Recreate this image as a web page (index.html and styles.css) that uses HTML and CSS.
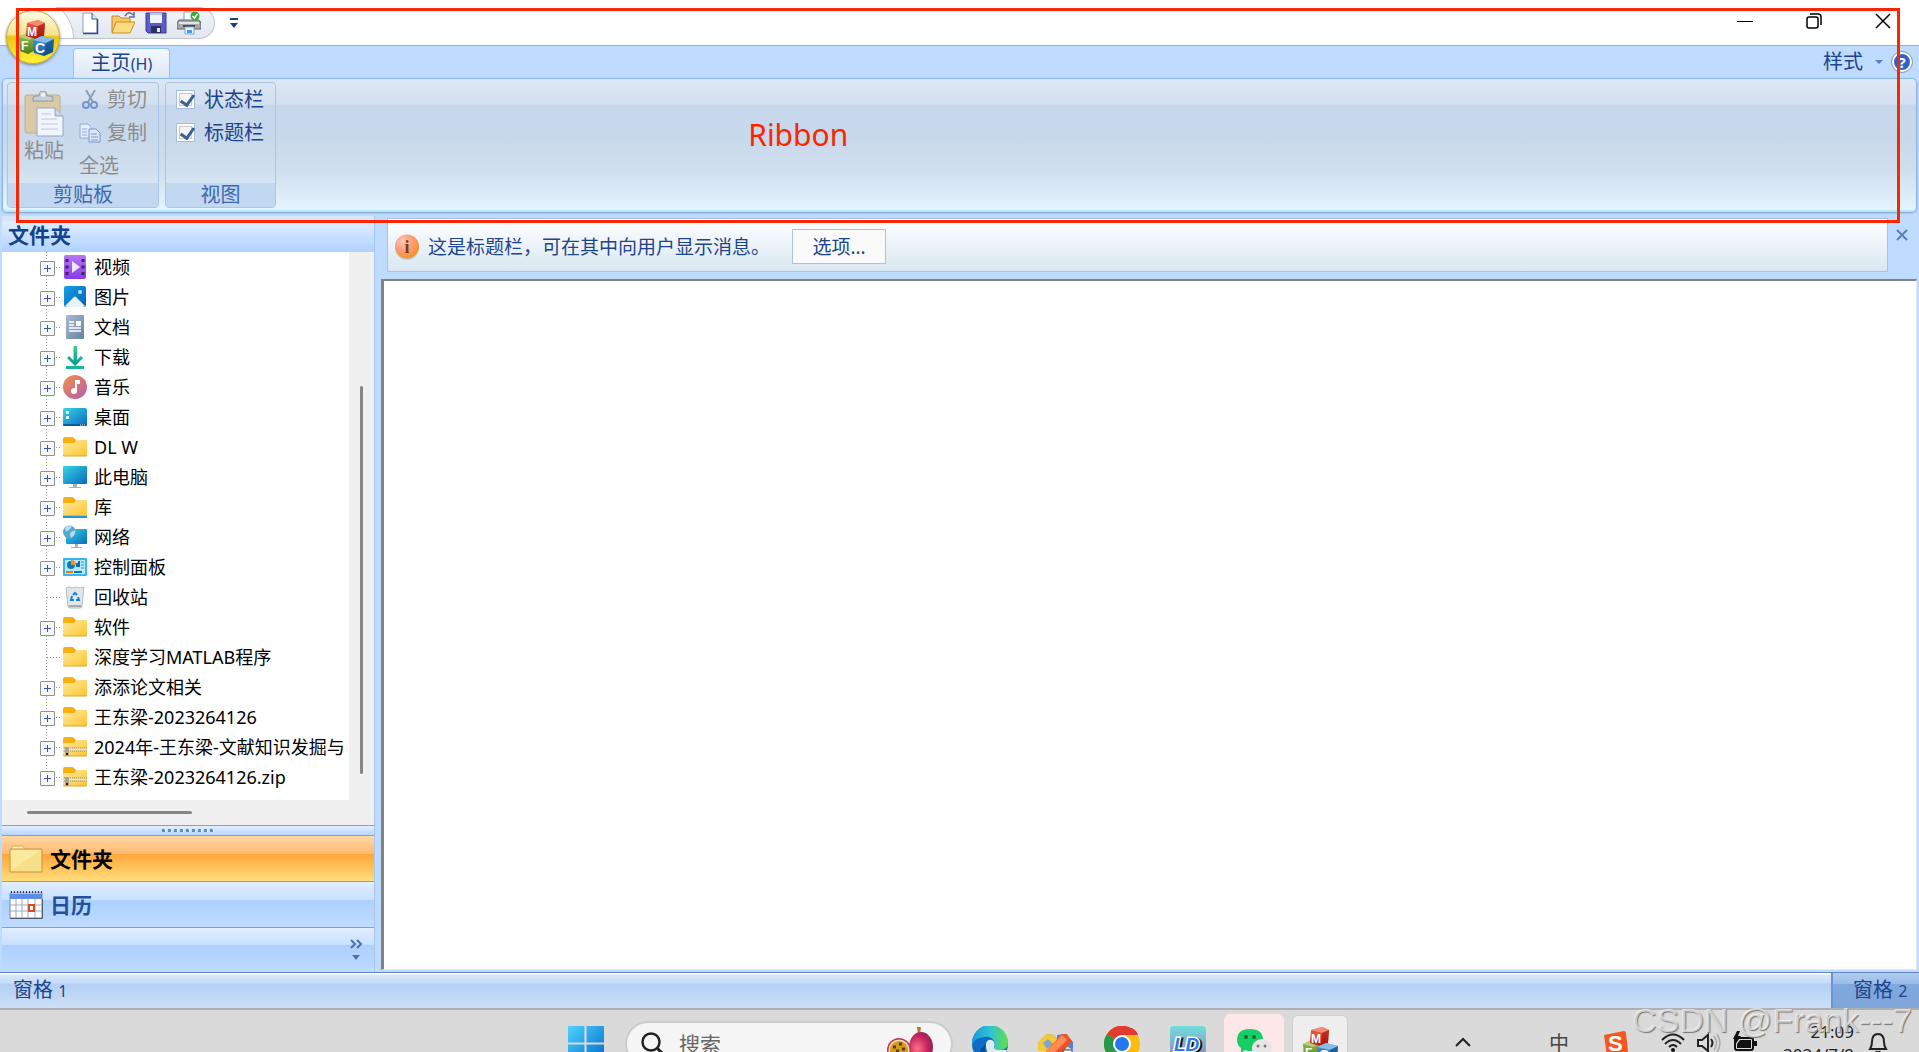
FILE: index.html
```
<!DOCTYPE html>
<html lang="zh-CN">
  <head>
    <meta charset="utf-8">
    <title>MFC</title>
    <link rel="stylesheet" href="styles.css">
  </head>

  <body>

    <!-- shared icons -->
    <svg class="sprite" aria-hidden="true">
      <defs>
        <linearGradient id="g-folder" x1="0" y1="0" x2="1" y2="1"><stop offset="0" stop-color="#ffe9a0"/><stop offset="1" stop-color="#fdc62f"/></linearGradient>
        <linearGradient id="g-screen" x1="0" y1="0" x2="1" y2="1"><stop offset="0" stop-color="#35d6e6"/><stop offset="1" stop-color="#0a67bd"/></linearGradient>
        <linearGradient id="g-purple" x1="0" y1="0" x2="0" y2="1"><stop offset="0" stop-color="#b777f5"/><stop offset="1" stop-color="#8a3ce6"/></linearGradient>
        <linearGradient id="g-pic" x1="0" y1="0" x2="1" y2="1"><stop offset="0" stop-color="#17a1e6"/><stop offset="1" stop-color="#0560b8"/></linearGradient>
        <linearGradient id="g-doc" x1="0" y1="0" x2="1" y2="1"><stop offset="0" stop-color="#a9bccf"/><stop offset="1" stop-color="#6583a2"/></linearGradient>
        <linearGradient id="g-down" x1="0" y1="0" x2="0" y2="1"><stop offset="0" stop-color="#3bcf8c"/><stop offset="1" stop-color="#0a9f98"/></linearGradient>
        <linearGradient id="g-music" x1="0" y1="0" x2="1" y2="1"><stop offset="0" stop-color="#f39148"/><stop offset="1" stop-color="#b25cae"/></linearGradient>
        <linearGradient id="g-red" x1="0" y1="0" x2="0" y2="1"><stop offset="0" stop-color="#ef6a55"/><stop offset="1" stop-color="#b91a12"/></linearGradient>
        <linearGradient id="g-blue" x1="0" y1="0" x2="0" y2="1"><stop offset="0" stop-color="#4f9bdc"/><stop offset="1" stop-color="#155896"/></linearGradient>
        <linearGradient id="g-green" x1="0" y1="0" x2="0" y2="1"><stop offset="0" stop-color="#9cc251"/><stop offset="1" stop-color="#4b7c1d"/></linearGradient>
        <linearGradient id="g-win" gradientUnits="userSpaceOnUse" x1="0" y1="0" x2="35" y2="35"><stop offset="0" stop-color="#4fd5ff"/><stop offset="1" stop-color="#0067c8"/></linearGradient>
        <linearGradient id="g-edge" x1="0" y1="0" x2="1" y2="0"><stop offset="0" stop-color="#1899dc"/><stop offset=".5" stop-color="#2fc2d4"/><stop offset="1" stop-color="#62e04b"/></linearGradient>
        <linearGradient id="g-ld" x1="0" y1="0" x2="0" y2="1"><stop offset="0" stop-color="#6fdfdb"/><stop offset="1" stop-color="#9a79b9"/></linearGradient>
        <radialGradient id="g-fruit" cx=".35" cy=".55" r=".7"><stop offset="0" stop-color="#ff7088"/><stop offset=".6" stop-color="#c8245f"/><stop offset="1" stop-color="#7e2458"/></radialGradient>
        <radialGradient id="g-info" cx=".35" cy=".3" r=".8"><stop offset="0" stop-color="#ffc9b8"/><stop offset=".5" stop-color="#fb9a72"/><stop offset="1" stop-color="#f09413"/></radialGradient>
      </defs>
      <symbol id="i-folder" viewBox="0 0 24 24">
        <path d="M0 4Q0 2 2 2h7q1 0 2 1l2 2v4H0z" fill="#f7b00c"/>
        <path d="M1 8h10l3-3h9q1 0 1 1v14q0 1-1 1H1q-1 0-1-1V9q0-1 1-1z" fill="url(#g-folder)"/>
        <path d="M0 20q0 1 1 1h22q1 0 1-1" fill="none" stroke="#e0a32a"/>
      </symbol>
      <symbol id="i-zip" viewBox="0 0 24 24">
        <use href="#i-folder"/>
        <path d="M1 13h23M1 16h23" stroke="#b09a6c" stroke-width="1.5" stroke-dasharray="1 1"/>
        <path d="M1 14.500h23" stroke="#e8e5dd" stroke-width="1.5"/>
        <path d="M2 12h4v9H2z" fill="#a5a5a0"/><path d="M3 18h2v2H3z" fill="#222"/>
      </symbol>
      <symbol id="i-video" viewBox="0 0 24 24">
        <rect x="1" y="0" width="22" height="24" rx="2" fill="url(#g-purple)"/>
        <path d="M4 4v16M20 4v16" stroke="#40206f" stroke-width="3" stroke-dasharray="3 3.5"/>
        <path d="M9 6l8 6-8 6z" fill="#eee5f7"/>
      </symbol>
      <symbol id="i-picture" viewBox="0 0 24 24">
        <rect x="1" y="1" width="22" height="21" rx="2" fill="url(#g-pic)"/>
        <path d="M2 21l9-9q1-1 2 0l9 9q-1 1-2 1H4q-1 0-2-1z" fill="#e8f4fc"/><circle cx="17" cy="7" r="2" fill="#b9e5fb"/>
      </symbol>
      <symbol id="i-doc" viewBox="0 0 24 24">
        <rect x="3" y="0" width="18" height="24" rx="1" fill="url(#g-doc)"/>
        <path d="M6 7h5M6 10h5M6 13h12M6 16h12" stroke="#fff" stroke-width="1.5"/><path d="M13 6h5v5h-5z" fill="#fff"/>
      </symbol>
      <symbol id="i-download" viewBox="0 0 24 24">
        <path d="M12 1v17M5 12l7 7 7-7" fill="none" stroke="url(#g-down)" stroke-width="3"/>
        <path d="M11 1h3v17h-3z" fill="url(#g-down)"/><path d="M3 21h18v3H3z" fill="#18b59a"/>
      </symbol>
      <symbol id="i-music" viewBox="0 0 24 24">
        <circle cx="12" cy="12" r="12" fill="url(#g-music)"/>
        <ellipse cx="11" cy="16" rx="3" ry="3" fill="#fff"/><path d="M12 16V5h5v4h-3v7z" fill="#fff"/>
      </symbol>
      <symbol id="i-desktop" viewBox="0 0 24 24">
        <rect x="0" y="3" width="24" height="18" rx="2" fill="url(#g-screen)"/>
        <path d="M3 6h3v3H3zM3 11h3v3H3z" fill="#e5fcff"/><path d="M0 19h24v1q0 1-1 1H1q-1 0-1-1z" fill="#075d97"/>
        <path d="M17 20h5" stroke="#fff" stroke-dasharray="1 1"/>
      </symbol>
      <symbol id="i-pc" viewBox="0 0 24 24">
        <path d="M10 18h4v4h4v1H6v-1h4z" fill="#a4b2bf"/>
        <rect x="0" y="1" width="24" height="18" rx="1" fill="url(#g-screen)"/>
      </symbol>
      <symbol id="i-library" viewBox="0 0 24 24">
        <use href="#i-folder"/><path d="M0 20h24v3H0z" fill="#1f96dc"/><path d="M0 20.500h24" stroke="#7acbf3"/>
      </symbol>
      <symbol id="i-network" viewBox="0 0 24 24">
        <path d="M12 18h3v4h4v1H8v-1h4z" fill="#a4b2bf"/>
        <rect x="3" y="4" width="21" height="15" rx="1" fill="url(#g-screen)"/>
        <circle cx="6.500" cy="7" r="6.500" fill="#5aa5cf"/>
        <path d="M2 3q4-4 7-2l-2 3-4 3zM8 7l4-2q1 5-4 8l-1-4z" fill="#b4ddef"/>
      </symbol>
      <symbol id="i-control" viewBox="0 0 24 24">
        <rect x="0" y="3" width="24" height="18" rx="1" fill="#37b5ee"/><rect x="2" y="5" width="20" height="14" fill="#b9e8fc"/>
        <circle cx="8" cy="10" r="4" fill="#087ac2"/><path d="M8 5v5h5q0-5-5-5z" fill="#f8901e"/>
        <path d="M14 12V8M16 12V6" stroke="#096cad" stroke-width="2"/><path d="M18 7h3M18 10h3M18 13h3" stroke="#2592cf"/>
        <path d="M3 17h7" stroke="#ef7810" stroke-width="2"/><path d="M11 17h8" stroke="#087ac2" stroke-width="2"/>
      </symbol>
      <symbol id="i-bin" viewBox="0 0 24 24">
        <path d="M3 3l3-1 3 1 4-1 4 1 4-1-2 19q0 2-2 2H7q-2 0-2-2z" fill="#e2e6e9" stroke="#b4bcc2"/>
        <path d="M6 21h12" stroke="#aaa" stroke-width="2"/>
        <path d="M10 10l2-2 2 2M15 12l1 3h-3M11 15H8l1-4" fill="none" stroke="#1681d4" stroke-width="2"/>
      </symbol>
      <symbol id="i-cubes" viewBox="0 0 36 36">
        <path d="M1 17l8-4 9 3v14l-8 4-8-3z" fill="url(#g-green)"/><path d="M1 17l8-4 9 3-7 4z" fill="#b3d179"/>
        <path d="M9 3l11-3 7 3-1 13-8 3-10-3z" fill="url(#g-red)"/><path d="M9 3l11-3 7 3-7 3z" fill="#f58a79"/><path d="M20 6l7-3-1 13-7 3z" fill="#9e140f" opacity=".6"/>
        <path d="M15 20l9-4 12 3-1 13-9 4-10-3z" fill="url(#g-blue)"/><path d="M15 20l9-4 12 3-8 4z" fill="#89bde9"/><path d="M28 23l8-4-1 13-9 4z" fill="#0c477f" opacity=".6"/>
        <text x="9" y="16" font-size="12" class="cube-letter">M</text>
        <text x="3" y="30" font-size="12" class="cube-letter">F</text>
        <text x="17" y="33" font-size="14" class="cube-letter">C</text>
      </symbol>
    </svg>

    <header class="titlebar">
      <div class="quickbar">
        <button aria-label="新建"><svg viewBox="0 0 24 24"><path d="M5 2h9l5 6v14H5z" fill="#fff" stroke="#8ba0ba"/><path d="M14 2v6h5" fill="#dce6f2" stroke="#36588a"/><path d="M19.500 8v14.500H5" fill="none" stroke="#2c5188" stroke-width="1.500"/></svg></button>
        <button aria-label="打开"><svg viewBox="0 0 24 24"><path d="M1 5h7l2 2h9v14H1z" fill="#f5c765" stroke="#c58a2c"/><path d="M5 11h19l-5 11H1z" fill="#ffdc83" stroke="#d18b1f"/><path d="M14 5q4-6 8-1M23 1v5h-5" fill="none" stroke="#526d93" stroke-width="1.500"/></svg></button>
        <button aria-label="保存"><svg viewBox="0 0 24 24"><path d="M2 2h20v20H4l-2-2z" fill="#5b5bc9" stroke="#3b3b9b"/><path d="M6 2h12v10H6z" fill="#f2f5ff"/><path d="M6 2h12v2H6z" fill="#b8c7f2"/><path d="M7 15h10v7H7z" fill="#2a315f"/><path d="M13 17h3v4h-3z" fill="#e0e4f5"/></svg></button>
        <button aria-label="打印"><svg viewBox="0 0 24 24"><path d="M7 1h10v9H7z" fill="#f8fbff" stroke="#8aa4c6"/><path d="M2 9h20q2 2 2 4v5H0v-5q0-2 2-4z" fill="#a6a7ac" stroke="#606268"/><path d="M2 12h20" stroke="#e1e3e6" stroke-width="2"/><path d="M6 15h12" stroke="#45474c" stroke-width="2"/><path d="M8 16h9v7H8z" fill="#e8f5ff" stroke="#7ba7d1"/><path d="M10 19h5v3h-5z" fill="#3c9be0"/><circle cx="18" cy="5" r="4.500" fill="#38aa38"/><path d="M15.500 5l2 2 3-4" fill="none" stroke="#fff" stroke-width="1.500"/></svg></button>
      </div>
      <button class="quickmore" aria-label="自定义快速访问工具栏"><svg viewBox="0 0 10 10"><path d="M1 1h8" stroke="#1c3f7c" stroke-width="2"/><path d="M1 5h8L5 10z" fill="#1c3f7c"/></svg></button>
      <div class="winbuttons">
        <button aria-label="最小化"><svg viewBox="0 0 16 16"><path d="M0 8.500h16" stroke-width="1"/></svg></button>
        <button aria-label="还原"><svg viewBox="0 0 16 16"><rect x="1" y="4" width="11" height="11" rx="2"/><path d="M4 1h8q3 0 3 3v8"/></svg></button>
        <button aria-label="关闭"><svg viewBox="0 0 16 16"><path d="M1 1l14 14M15 1L1 15"/></svg></button>
      </div>
    </header>
    <button class="appbutton" aria-label="应用程序"><svg viewBox="0 0 36 36"><use href="#i-cubes"/></svg></button>

    <nav class="tabs">
      <button class="tab">主页<small>(H)</small></button>
      <button class="style">样式 <i class="arrow"></i></button>
      <button class="help" aria-label="帮助">?</button>
    </nav>

    <section class="ribbon">
      <div class="group">
        <div class="groupbody">
          <button class="paste" disabled>
            <svg viewBox="0 0 40 46"><rect x="1" y="4" width="35" height="38" rx="2" fill="#d9c9a4" stroke="#c0b08b"/><path d="M9 10V7q0-2 3-2h3q0-5 4-5t4 5h3q3 0 3 2v3z" fill="#c8d0d6" stroke="#8f9aa3"/><circle cx="19" cy="4" r="2" fill="#f0f4f8"/><path d="M13 17h18l8 8v20H13z" fill="#f0f5fc" stroke="#93a6c2"/><path d="M31 17v8h8" fill="#c6d5ea" stroke="#93a6c2"/><path d="M17 23h10M17 28h16M17 33h17M17 38h17" stroke="#c0c9d8"/></svg>
            粘贴
          </button>
          <div class="commands">
            <button disabled><svg viewBox="0 0 20 20"><path d="M6 0l7 12M15 0L8 12" stroke="#8f9fb5" stroke-width="2"/><circle cx="6" cy="15" r="3" fill="none" stroke="#7595cc" stroke-width="2"/><circle cx="14" cy="15" r="3" fill="none" stroke="#7595cc" stroke-width="2"/></svg>剪切</button>
            <button disabled><svg viewBox="0 0 22 20"><path d="M1 1h8l3 3v11H1z" fill="#e6eefb" stroke="#8fa9d8"/><path d="M3 6h5M3 9h5M3 12h5" stroke="#91aad5"/><path d="M10 6h7l4 4v9H10z" fill="#dce8fa" stroke="#7594cf"/><path d="M12 11h6M12 14h7M12 17h7" stroke="#7c99d0"/></svg>复制</button>
            <button disabled>全选</button>
          </div>
        </div>
        <h2>剪贴板</h2>
      </div>
      <div class="group">
        <div class="groupbody checks">
          <label><input type="checkbox" checked>状态栏</label>
          <label><input type="checkbox" checked>标题栏</label>
        </div>
        <h2>视图</h2>
      </div>
    </section>

    <main class="work">
      <aside class="sidebar">
        <h2>文件夹</h2>
        <div class="treebox">
          <ul class="tree">
            <li class="more"><svg><use href="#i-video"/></svg>视频</li>
            <li class="more"><svg><use href="#i-picture"/></svg>图片</li>
            <li class="more"><svg><use href="#i-doc"/></svg>文档</li>
            <li class="more"><svg><use href="#i-download"/></svg>下载</li>
            <li class="more"><svg><use href="#i-music"/></svg>音乐</li>
            <li class="more"><svg><use href="#i-desktop"/></svg>桌面</li>
            <li class="more"><svg><use href="#i-folder"/></svg>DL W</li>
            <li class="more"><svg><use href="#i-pc"/></svg>此电脑</li>
            <li class="more"><svg><use href="#i-library"/></svg>库</li>
            <li class="more"><svg><use href="#i-network"/></svg>网络</li>
            <li class="more"><svg><use href="#i-control"/></svg>控制面板</li>
            <li><svg><use href="#i-bin"/></svg>回收站</li>
            <li class="more"><svg><use href="#i-folder"/></svg>软件</li>
            <li><svg><use href="#i-folder"/></svg>深度学习MATLAB程序</li>
            <li class="more"><svg><use href="#i-folder"/></svg>添添论文相关</li>
            <li class="more"><svg><use href="#i-folder"/></svg>王东梁-2023264126</li>
            <li class="more"><svg><use href="#i-zip"/></svg>2024年-王东梁-文献知识发掘与</li>
            <li class="more"><svg><use href="#i-zip"/></svg>王东梁-2023264126.zip</li>
          </ul>
          <div class="vscroll"><i></i></div>
        </div>
        <div class="hscroll"><i></i></div>
        <div class="splitter"><i></i></div>
        <button class="pane active"><svg viewBox="0 0 34 30"><path d="M2 6q0-4 3-4h8q2 0 3 4z" fill="#fdf0b5" stroke="#d9a84f"/><path d="M1 5h32v23H1z" fill="#f6df86" stroke="#c79342"/><path d="M2 6h30L2 27z" fill="#fff0ae" opacity=".6"/></svg>文件夹</button>
        <button class="pane"><svg viewBox="0 0 34 30"><path d="M1 3h32v25H1z" fill="#fff" stroke="#7385ad"/><path d="M1 4h32v5H1z" fill="#5f8ce8"/><path d="M2 2h31" stroke="#333" stroke-width="2" stroke-dasharray="1 2"/><path d="M1 15h32M1 21h32M7 9v19M13 9v19M19 9v19M26 9v19" stroke="#9babc7"/><path d="M20 15h5v6h-5z" fill="#fff" stroke="#d84b22" stroke-width="2"/><path d="M1 28.500h32.500V9" fill="none" stroke="#4e5870"/></svg>日历</button>
        <div class="panefoot"><button aria-label="配置按钮"><svg viewBox="0 0 14 22"><path d="M2 1l4 4-4 4M8 1l4 4-4 4" fill="none" stroke="#4d74aa" stroke-width="2"/><path d="M3 16h8l-4 5z" fill="#4d74aa"/></svg></button></div>
      </aside>

      <section class="content">
        <div class="message">
          <div class="messagebar">
            <svg viewBox="0 0 26 26"><circle cx="13" cy="14" r="12" fill="#a9a9ad" opacity=".5"/><circle cx="13" cy="12.500" r="12" fill="url(#g-info)"/><text x="13" y="19" font-size="18" class="info-letter">i</text></svg>
            <span>这是标题栏，可在其中向用户显示消息。</span>
            <button>选项...</button>
          </div>
          <button class="dismiss" aria-label="关闭消息"><svg viewBox="0 0 12 12"><path d="M1 1l10 10M11 1L1 11" stroke="#5a80b8" stroke-width="2"/></svg></button>
        </div>
        <div class="view"></div>
      </section>
    </main>

    <footer class="status">
      <span>窗格 <small>1</small></span>
      <span class="dark">窗格 <small>2</small></span>
    </footer>

    <div class="taskbar">
      <div class="apps">
        <button aria-label="开始"><svg viewBox="0 0 35 35"><path d="M0 1q0-1 1-1h15v16H0zM18 0h16q1 0 1 1v15H18zM0 18h16v17H0zM18 18h17v17H18z" fill="url(#g-win)"/></svg></button>
        <label class="search">
          <svg viewBox="0 0 24 24"><circle cx="10" cy="10" r="8.500" fill="none" stroke="#222" stroke-width="2.500"/><path d="M16 16l7 7" stroke="#222" stroke-width="3"/></svg>
          <input type="text" placeholder="搜索" aria-label="搜索">
          <svg class="fruit" viewBox="0 0 46 40"><path d="M30 0h4l-1 8h-2z" fill="#b7773a"/><ellipse cx="34" cy="20" rx="12" ry="15" fill="url(#g-fruit)"/><circle cx="12" cy="23" r="12" fill="#c03558"/><circle cx="12" cy="23" r="10.500" fill="#f6dfb0"/><circle cx="12" cy="23" r="9" fill="#d49b1e"/><path d="M6 20h3M12 17h3M15 22h3M9 24h3M7 28h3" stroke="#5a3b12" stroke-width="3"/></svg>
        </label>
        <button aria-label="Edge"><svg viewBox="0 0 36 36"><circle cx="18" cy="18" r="18" fill="#0f6cc4"/><path d="M0 18A18 18 0 0 1 36 16q0 8-8 8-6 0-6-3 2-2 0-6-3-5-9-4Q3 12 0 18z" fill="url(#g-edge)"/><path d="M14 18q1-5 6-4 4 2 2 7 0 3 6 3h7l-6 9q-16-1-15-15z" fill="#dcebee"/><path d="M14 18q-4 9 5 16l-8-1Q3 26 14 18z" fill="#0a4d98"/></svg></button>
        <button class="low" aria-label="Visual Studio"><svg viewBox="0 0 36 36"><path d="M2 7l7-7 7 1 18 24-6 9-6-3z" fill="#6fae3c"/><path d="M0 8l8-8 8 1 4 6-11 10H0z" fill="#f3c93c"/><path d="M5 9l5-4 5 5-6 5z" fill="#7aa6cf"/><path d="M19 1l8-1 8 8v8L19 6z" fill="#4f82cf"/><path d="M24 0h5l5 7-22 26H4L0 26z" fill="#e8552b"/><path d="M24 1l5 5L9 26l-5-4z" fill="#ff8a55"/><path d="M25 16h9v10h-9z" fill="#fff" stroke="#444"/></svg></button>
        <button aria-label="Chrome"><svg viewBox="0 0 36 36"><circle cx="18" cy="18" r="18" fill="#fbbc10"/><path d="M18 18L3 8A18 18 0 0 1 34 9H18z" fill="#e33b2e"/><path d="M18 9h16q-1-4-6-7H10z" fill="#e33b2e"/><path d="M18 18L3 8A18 18 0 0 0 17 36l8-14z" fill="#279847"/><circle cx="18" cy="18" r="9" fill="#fff"/><circle cx="18" cy="18" r="7" fill="#2678ed"/></svg></button>
        <button aria-label="LD"><svg viewBox="0 0 36 36"><rect width="36" height="36" rx="4" fill="url(#g-ld)"/><text x="6" y="26" font-size="19" class="ld-letter ld-shadow">LD</text><text x="4" y="25" font-size="19" class="ld-letter">LD</text></svg></button>
        <button class="tile alert" aria-label="微信"><svg viewBox="0 0 36 36"><path d="M14 3q13 0 13 11T14 25q-3 0-5-1l-4 3v-5q-4-3-4-8Q1 3 14 3z" fill="#16ce64"/><circle cx="10" cy="11" r="2" fill="#17683a"/><circle cx="18" cy="11" r="2" fill="#17683a"/><ellipse cx="26" cy="22" rx="10" ry="9" fill="#e6e6e6"/><circle cx="22" cy="20" r="1.500" fill="#777"/><circle cx="29" cy="20" r="1.500" fill="#777"/></svg></button>
        <button class="tile" aria-label="MFC"><svg viewBox="0 0 36 36"><use href="#i-cubes"/></svg></button>
      </div>
      <div class="tray">
        <svg class="chevron" viewBox="0 0 18 24"><path d="M2 16l7-7 7 7" fill="none" stroke="#222" stroke-width="2"/></svg>
        <span class="ime">中</span>
        <svg class="sogou" viewBox="0 0 24 24"><path d="M0 4L20 0q2 0 2 2l2 19-21 5z" fill="#f4581f"/><text x="4" y="20" font-size="22" class="s-letter">S</text></svg>
        <svg viewBox="0 0 24 24"><path d="M1 10q11-11 22 0M4 14q8-8 16 0M8 17q4-4 8 0" fill="none" stroke="#222" stroke-width="2"/><circle cx="12" cy="20" r="2" fill="#111"/></svg>
        <svg viewBox="0 0 24 24"><path d="M1 10h4l6-5v16l-6-5H1z" fill="none" stroke="#222" stroke-width="2"/><path d="M14 9q3 4 0 8" fill="none" stroke="#222" stroke-width="2"/><path d="M17 6q5 7 0 14M20 4q6 9 0 18" fill="none" stroke="#aaa" stroke-width="1.500"/></svg>
        <svg viewBox="0 0 24 24"><rect x="2" y="8" width="18" height="12" rx="2" fill="none" stroke="#111" stroke-width="2"/><path d="M7 10h11v8H4v-4zM21 11h3v5h-3zM4 1L0 9h3l-1 6 6-9H5l2-5z" fill="#111"/></svg>
        <div class="clock">21:09<br>2024/7/9</div>
        <svg class="bell" viewBox="0 0 20 24"><path d="M2 19q2-3 2-7 0-8 6-8t6 8q0 4 2 7zM8 21q2 3 4 0" fill="none" stroke="#222" stroke-width="2"/></svg>
      </div>
    </div>

    <div class="callout"><span>Ribbon</span></div>
    <div class="watermark">CSDN @Frank---7</div>

  </body>
</html>
```
FILE: styles.css
```
/* Base
------------------------------- */

* {
  box-sizing: border-box;
}

body {
  margin: 0;
  height: 100vh;
  display: flex;
  flex-direction: column;
  position: relative;
  overflow: hidden;
  background: #bfdbff;
  color: #1d458b;
  font: 20px/24px "Noto Sans", "Noto Sans CJK SC", sans-serif;
}

button {
  padding: 0;
  border: 0;
  background: none;
  color: inherit;
  font: inherit;
}

svg {
  display: block;
  flex: none;
}

h2 {
  margin: 0;
}

small {
  font-size: 16px;
}

.sprite {
  position: absolute;
  width: 0;
  height: 0;
}

.cube-letter, .info-letter, .ld-letter, .s-letter {
  font-family: "Liberation Sans", sans-serif;
  font-weight: bold;
  fill: #fff;
}

.info-letter {
  font-family: "Liberation Serif", serif;
  text-anchor: middle;
  fill: #7a3a1c;
}

.ld-letter {
  font-style: italic;
  fill: #2e7be6;
  stroke: #fff;
  paint-order: stroke;
  stroke-width: 3;
}

.ld-shadow {
  fill: #111;
  stroke: #111;
}

/* Title bar
------------------------------- */

.titlebar {
  display: flex;
  flex: none;
  height: 46px;
  padding: 7px 2px 0 56px;
  background: #fff;
  border-bottom: 1px solid #8fb0de;
}

.quickbar {
  display: flex;
  align-items: center;
  position: relative;
  overflow: hidden;
  gap: 9px;
  width: 159px;
  height: 32px;
  padding-left: 22px;
  border: 1px solid #c0c4cc;
  border-left: 0;
  border-radius: 0 16px 16px 0;
  background: linear-gradient(#f1f4f8, #e3e7ee);
}

/* white bite around the round button */
.quickbar:before {
  content: "";
  position: absolute;
  left: -60px;
  top: -9px;
  width: 76px;
  height: 76px;
  border: 1px solid #c0c4cc;
  border-radius: 50%;
  background: #fff;
}

.quickbar button, .quickbar svg {
  width: 24px;
  height: 24px;
}

.quickmore {
  width: 10px;
  height: 10px;
  margin: 11px 0 0 14px;
}

.winbuttons {
  display: flex;
  margin-left: auto;
}

.winbuttons button {
  display: flex;
  justify-content: center;
  width: 69px;
  padding-top: 6px;
}

.winbuttons svg {
  width: 16px;
  height: 16px;
  fill: none;
  stroke: #000;
  stroke-width: 1.5;
}

.appbutton {
  position: absolute;
  left: 6px;
  top: 10px;
  width: 54px;
  height: 54px;
  padding: 8px 7px 6px 11px;
  border: 1px solid #c9a93b;
  border-radius: 50%;
  background: linear-gradient(#fffbe6, #f5e48c 45%, #edc40c 50%, #fff23a);
  box-shadow: 0 1px 3px #777;
}

.appbutton svg {
  width: 36px;
  height: 38px;
}

/* Ribbon
------------------------------- */

.tabs {
  display: flex;
  flex: none;
  align-items: center;
  height: 32px;
  padding: 0 7px 0 73px;
}

.tab {
  align-self: flex-end;
  width: 97px;
  height: 30px;
  border: 1px solid #8fc5ee;
  border-bottom: 0;
  border-radius: 4px 4px 0 0;
  background: linear-gradient(#f3f8fe, #dce8f6);
}

.style {
  display: flex;
  align-items: center;
  gap: 12px;
  margin-left: auto;
}

.arrow {
  border: 4px solid transparent;
  border-top-color: #5a80b8;
  border-bottom: 0;
}

.help {
  width: 20px;
  height: 20px;
  margin-left: 9px;
  border: 2px solid #fff;
  border-radius: 50%;
  outline: 1px solid #8b9cba;
  background: #2e62c9;
  color: #fff;
  font-size: 15px;
  line-height: 16px;
  font-weight: bold;
}

.ribbon {
  display: flex;
  flex: none;
  gap: 6px;
  height: 134px;
  margin: 0 2px 4px;
  padding: 3px 4px 2px;
  border: 1px solid #8db8e4;
  border-bottom: 2px solid #b0e8f8;
  border-radius: 5px;
  background: linear-gradient(#dce7f4, #d3e0f0 19%, #c6d7ed 20%, #c9d9ec 45%, #cfdfee 70%, #e4f5ff);
  box-shadow: 0 1px 2px #7c9ac8;
}

.group {
  display: flex;
  flex-direction: column;
  overflow: hidden;
  border: 1px solid #aac6e2;
  border-radius: 4px;
}

.group h2 {
  margin-top: auto;
  height: 24px;
  background: #c1d8f0;
  color: #3e69ad;
  font-size: 20px;
  line-height: 24px;
  font-weight: normal;
  text-align: center;
}

.groupbody {
  display: flex;
  align-items: flex-start;
  gap: 15px;
  padding: 0 11px 0 16px;
}

.groupbody button {
  color: #8d8d8d;
}

.paste svg {
  width: 40px;
  height: 46px;
  margin: 8px 0 2px;
}

.commands {
  display: flex;
  flex-direction: column;
}

.commands button {
  display: flex;
  align-items: center;
  gap: 6px;
  height: 33px;
}

.commands svg {
  width: 22px;
  height: 20px;
}

.checks {
  flex-direction: column;
  gap: 0;
  padding: 0 11px 0 10px;
}

.checks label {
  display: flex;
  align-items: center;
  gap: 9px;
  height: 33px;
}

.checks input {
  appearance: none;
  width: 19px;
  height: 19px;
  margin: 0;
  border: 1px solid #a3bfdf;
  background: #f4f4f4;
  box-shadow: inset 0 0 0 2px #fff, inset 0 0 0 3px #c4c8ce;
}

.checks input:checked:before {
  content: "";
  display: block;
  width: 6px;
  height: 11px;
  margin: 1px 0 0 6px;
  border: solid #3c5f92;
  border-width: 0 3px 3px 0;
  transform: rotate(35deg);
}

/* Sidebar
------------------------------- */

.work {
  display: flex;
  flex: 1;
  min-height: 0;
}

.sidebar {
  display: flex;
  flex-direction: column;
  flex: none;
  width: 375px;
  padding-left: 2px;
  border-right: 1px solid #a6c6f0;
}

.sidebar h2 {
  flex: none;
  height: 36px;
  padding: 5px 0 0 6px;
  background: linear-gradient(#d9e6f5 5px, #e1eeff 6px, #afd2ff);
  color: #14428b;
  font-size: 21px;
  line-height: 28px;
}

.treebox {
  display: flex;
  flex: 1;
  min-height: 0;
  background: #fff;
}

.tree {
  flex: 1;
  min-width: 0;
  overflow: hidden;
  margin: 0;
  padding: 0 0 0 43px;
  list-style: none;
  color: #000;
  font-size: 18px;
}

.tree li {
  display: flex;
  align-items: center;
  height: 30px;
  position: relative;
  white-space: nowrap;
  background: repeating-linear-gradient(#999 0 1px, transparent 1px 3px) 1px 0 / 1px 100% no-repeat,
    repeating-linear-gradient(90deg, #999 0 1px, transparent 1px 3px) 2px 15px / 15px 1px no-repeat;
}

.tree li:last-child {
  background-size: 1px 50%, 15px 1px;
}

.tree svg {
  width: 24px;
  height: 24px;
  margin: 0 7px 0 18px;
}

.tree .more:before {
  content: "";
  position: absolute;
  left: -5px;
  top: 9px;
  width: 13px;
  height: 13px;
  border: 1px solid #919191;
  border-radius: 1px;
  background: linear-gradient(#3a56a5, #3a56a5) center / 7px 1px no-repeat,
    linear-gradient(#3a56a5, #3a56a5) center / 1px 7px no-repeat, #f7f7f7;
}

.vscroll {
  width: 25px;
  padding: 134px 0 26px 11px;
  background: #f0f0f0;
}

.hscroll {
  flex: none;
  height: 25px;
  padding: 11px 0 0 25px;
  background: #f0f0f0;
}

.vscroll i, .hscroll i {
  display: block;
  width: 3px;
  height: 100%;
  border-radius: 2px;
  background: #868686;
}

.hscroll i {
  width: 165px;
  height: 3px;
}

.splitter {
  display: flex;
  flex: none;
  align-items: center;
  justify-content: center;
  height: 11px;
  border: solid #76a3e0;
  border-width: 1px 0;
  background: linear-gradient(#e3efff, #b5d5ff);
}

.splitter i {
  width: 52px;
  height: 3px;
  background: repeating-linear-gradient(90deg, #5b8bd4 0 3px, #fff 3px 4px, transparent 4px 6px);
}

.pane {
  display: flex;
  flex: none;
  align-items: center;
  gap: 7px;
  height: 46px;
  padding-left: 7px;
  border-bottom: 1px solid #76a3e0;
  background: linear-gradient(#e1eeff, #c8e0ff 40%, #acd0ff 41%, #c0dbff);
  color: #24509a;
  font-size: 21px;
  font-weight: bold;
}

.pane svg {
  width: 34px;
  height: 30px;
}

.pane.active {
  background: linear-gradient(#ffd7a5, #ffbc72 39%, #ffa638 40%, #ffde7c);
  color: #000;
}

.panefoot {
  display: flex;
  flex: none;
  justify-content: flex-end;
  align-items: center;
  height: 44px;
  padding-right: 11px;
  background: linear-gradient(#e1eeff, #c8e0ff 38%, #acd0ff 39%, #c0dbff);
}

.panefoot svg {
  width: 14px;
  height: 22px;
}

/* Message bar and view
------------------------------- */

.content {
  display: flex;
  flex: 1;
  flex-direction: column;
  padding: 2px 2px 2px 6px;
}

.message {
  display: flex;
  align-items: flex-start;
  margin: 0 9px 7px 6px;
}

.messagebar {
  display: flex;
  flex: 1;
  align-items: center;
  height: 54px;
  padding: 3px 0 0 6px;
  border: 1px solid #a6c3e3;
  background: linear-gradient(#fff, #d9e6f2);
  font-size: 19px;
}

.messagebar svg {
  width: 26px;
  height: 26px;
  margin-right: 8px;
}

.messagebar button {
  width: 94px;
  height: 35px;
  margin-left: 22px;
  border: 1px solid #a6c3e3;
  background: #fafafa;
}

.dismiss {
  margin: 11px 0 0 8px;
}

.dismiss svg {
  width: 12px;
  height: 12px;
}

.view {
  flex: 1;
  border: 1px solid #e8e8e8;
  border-top: 2px solid #828282;
  border-left: 3px solid #828282;
  background: #fff;
}

/* Status bar
------------------------------- */

.status {
  display: flex;
  flex: none;
  justify-content: space-between;
  height: 38px;
  border-top: 1px solid #6288bd;
  border-bottom: 2px solid #afafaf;
  background: linear-gradient(#fff 1px, #d7e6f9 2px, #c7dcf8 10px, #b3d0f5 11px, #cddff7);
}

.status span {
  padding: 5px 13px;
}

.status .dark {
  width: 88px;
  padding-left: 20px;
  border-left: 2px solid #6c94cd;
  background: linear-gradient(#b0cdf2, #9abce9 30%, #80a9de 31%, #7fa4d8);
  white-space: nowrap;
}

/* Taskbar
------------------------------- */

.taskbar {
  display: grid;
  flex: none;
  grid-template-columns: 1fr auto 1fr;
  height: 42px;
  overflow: hidden;
  background: #dadada;
}

.apps {
  grid-column: 2;
  display: flex;
  align-items: flex-start;
  margin-right: 13px;
}

.apps button {
  display: flex;
  justify-content: center;
  width: 66px;
  padding-top: 16px;
}

.apps button svg {
  width: 36px;
  height: 36px;
}

.apps .low {
  padding-top: 24px;
}

.apps .tile {
  width: 56px;
  height: 60px;
  margin: 5px 5px 0;
  padding-top: 11px;
  border: 1px solid #d0d0d0;
  border-radius: 6px;
  background: #eee;
}

.apps .alert {
  width: 60px;
  margin: 4px 3px 0;
  border-color: #fde7e8;
  background: #fde7e8;
}

.search {
  display: flex;
  align-items: center;
  width: 328px;
  height: 46px;
  margin: 11px 4px 0 6px;
  padding: 0 18px 0 14px;
  border: 2px solid #cbcbcb;
  border-radius: 23px;
  background: #f5f5f5;
}

.search svg {
  width: 24px;
  height: 24px;
}

.search input {
  flex: 1;
  min-width: 0;
  margin-left: 14px;
  padding: 0;
  border: 0;
  background: none;
  font: 21px/24px "Noto Sans", "Noto Sans CJK SC", sans-serif;
}

.search input::placeholder {
  color: #666;
}

.search .fruit {
  width: 46px;
  height: 40px;
  margin-top: 6px;
}

.tray {
  display: flex;
  justify-content: flex-end;
  gap: 12px;
  padding: 10px 31px 0 0;
  color: #222;
}

.tray svg {
  width: 24px;
  height: 24px;
  margin-top: 10px;
}

.tray .chevron {
  width: 18px;
  margin-right: 65px;
}

.ime {
  margin: 12px 23px 0 0;
  color: #444;
}

.tray .sogou {
  margin: 11px 21px 0 0;
}

.tray .bell {
  width: 20px;
}

.clock {
  margin: 0 2px 0 14px;
  font-size: 17px;
  line-height: 23px;
  text-align: right;
}

/* Overlays
------------------------------- */

.callout {
  position: absolute;
  left: 16px;
  right: 19px;
  top: 8px;
  height: 215px;
  padding: 104px 0 0 38%;
  border: 3px solid #fb2500;
  color: #fb2500;
  font-size: 30px;
  line-height: 40px;
  pointer-events: none;
}

.watermark {
  position: absolute;
  right: 7px;
  bottom: 12px;
  color: rgba(255, 255, 255, .65);
  font: 34px/40px "Liberation Sans", sans-serif;
  text-shadow: 1px 1px 1px #777;
  pointer-events: none;
}
```
